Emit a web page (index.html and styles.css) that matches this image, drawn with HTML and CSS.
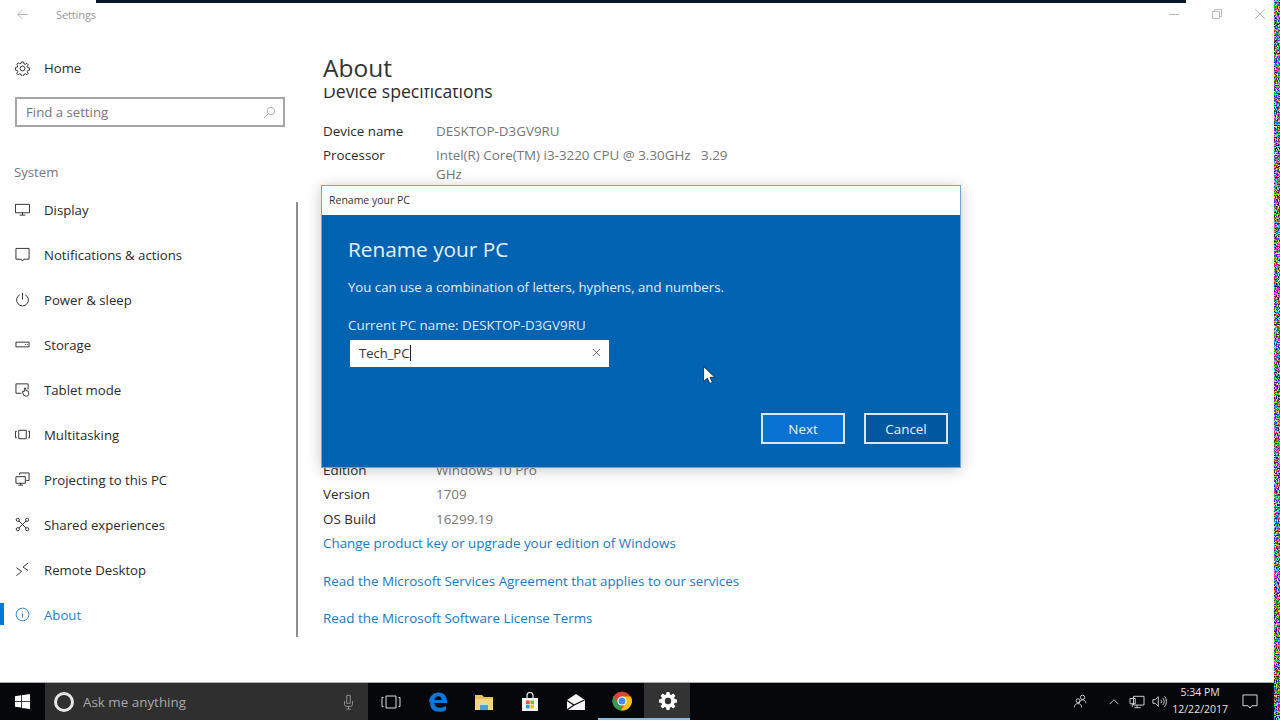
FILE: index.html
```html
<!DOCTYPE html>
<html lang="en">
<head>
  <meta charset="UTF-8">
  <meta name="viewport" content="width=device-width, initial-scale=1.0">
  <title>Settings - About</title>
  <link rel="stylesheet" href="styles.css">
</head>
<body>
  <div class="screen">
    <div class="desktop">
      <div class="video-bar"></div>

      <div class="titlebar">
        <svg class="back-icon" viewBox="0 0 14 12"><path d="M13 6H1M6 1 1 6l5 5"/></svg>
        <span class="app-name">Settings</span>
        <div class="win-controls">
          <svg viewBox="0 0 12 12"><path d="M1 6.5h10"/></svg>
          <svg viewBox="0 0 12 12"><path d="M1.5 3.5h7v7h-7zM3.5 3.5v-2h7v7h-2"/></svg>
          <svg viewBox="0 0 12 12"><path d="M1 1l10 10M11 1 1 11"/></svg>
        </div>
      </div>

      <div class="app">
        <aside class="sidebar">
          <div class="home">
            <svg class="nav-icon" viewBox="0 0 16 16"><circle cx="8" cy="8" r="2.6"/><path d="M6.9 1h2.2l.4 2 1.4.6 1.7-1.1 1.5 1.5-1.1 1.7.6 1.4 2 .4v2.2l-2 .4-.6 1.4 1.1 1.7-1.5 1.5-1.7-1.1-1.4.6-.4 2H6.9l-.4-2-1.4-.6-1.7 1.1-1.5-1.5 1.1-1.7-.6-1.4-2-.4V6.9l2-.4.6-1.4-1.1-1.7 1.5-1.5 1.7 1.1 1.4-.6z"/></svg>
            <span>Home</span>
          </div>
          <div class="search">
            <span>Find a setting</span>
            <svg viewBox="0 0 14 14"><circle cx="8.5" cy="5.5" r="4"/><path d="M5.5 8.5 1 13"/></svg>
          </div>
          <div class="section-label">System</div>
          <div class="nav-wrap">
            <nav class="nav">
              <a class="nav-item">
                <svg class="nav-icon" viewBox="0 0 16 16"><path d="M.5 2.5h15v9H.5zM8 11.5V14M5 14h6"/></svg>
                <span>Display</span>
              </a>
              <a class="nav-item">
                <svg class="nav-icon" viewBox="0 0 16 16"><path d="M1 1.5h14V13H9.5L8 15l-1.5-2H1z"/></svg>
                <span>Notifications &amp; actions</span>
              </a>
              <a class="nav-item">
                <svg class="nav-icon" viewBox="0 0 16 16"><path d="M8 1v7M5 3a6.3 6.3 0 1 0 6 0"/></svg>
                <span>Power &amp; sleep</span>
              </a>
              <a class="nav-item">
                <svg class="nav-icon" viewBox="0 0 16 16"><path d="M1 5.500h14v5H1zM10.500 8h1M13 8h.8"/></svg>
                <span>Storage</span>
              </a>
              <a class="nav-item">
                <svg class="nav-icon" viewBox="0 0 16 16"><path d="M7 12H1V2h13v6"/><path d="M10 8V6.500h1.500V9l3 1v3.500a2 2 0 0 1-2 1.500h-1a3 3 0 0 1-3-3l-.5-2H10z"/></svg>
                <span>Tablet mode</span>
              </a>
              <a class="nav-item">
                <svg class="nav-icon" viewBox="0 0 16 16"><path d="M4 3.500h8v9H4zM2 4.500H.5v7H2M14 4.500h1.500v7H14"/></svg>
                <span>Multitasking</span>
              </a>
              <a class="nav-item">
                <svg class="nav-icon" viewBox="0 0 16 16"><path d="M5 3V1h10v8h-3M1 5h10v7H1zM6 12v2M3.500 14h5"/></svg>
                <span>Projecting to this PC</span>
              </a>
              <a class="nav-item">
                <svg class="nav-icon" viewBox="0 0 16 16"><circle cx="3" cy="3" r="1.7"/><circle cx="13" cy="3" r="1.7"/><circle cx="3" cy="13" r="1.7"/><circle cx="13" cy="13" r="1.7"/><path d="M4.300 4.300l7.400 7.400M11.700 4.300l-7.400 7.400"/></svg>
                <span>Shared experiences</span>
              </a>
              <a class="nav-item">
                <svg class="nav-icon" viewBox="0 0 16 16"><path d="M1.500 6 7 10 1.500 14.500M14 1 8.500 5.500 14 9"/></svg>
                <span>Remote Desktop</span>
              </a>
              <a class="nav-item active">
                <svg class="nav-icon" viewBox="0 0 16 16"><circle cx="8" cy="8" r="6.8"/><path d="M8 7v4.500M8 4.500v1.200"/></svg>
                <span>About</span>
              </a>
            </nav>
            <div class="scroll-line"></div>
          </div>
        </aside>

        <main class="content">
          <h1 class="page-title">About</h1>
          <div class="scroller">
            <h2 class="spec-title">Device specifications</h2>
            <div class="spec-row"><span class="spec-key">Device name</span><span class="spec-val">DESKTOP-D3GV9RU</span></div>
            <div class="spec-row"><span class="spec-key">Processor</span><span class="spec-val">Intel(R) Core(TM) i3-3220 CPU @ 3.30GHz &nbsp; 3.29 GHz</span></div>
            <div class="covered"></div>
            <div class="spec-row"><span class="spec-key">Edition</span><span class="spec-val">Windows 10 Pro</span></div>
            <div class="spec-row"><span class="spec-key">Version</span><span class="spec-val">1709</span></div>
            <div class="spec-row"><span class="spec-key">OS Build</span><span class="spec-val">16299.19</span></div>
            <a class="link">Change product key or upgrade your edition of Windows</a>
            <a class="link">Read the Microsoft Services Agreement that applies to our services</a>
            <a class="link">Read the Microsoft Software License Terms</a>
          </div>
        </main>
      </div>

      <div class="dialog">
        <div class="dialog-title">Rename your PC</div>
        <div class="dialog-body">
          <h2 class="dialog-heading">Rename your PC</h2>
          <p class="dialog-hint">You can use a combination of letters, hyphens, and numbers.</p>
          <p class="dialog-current">Current PC name: DESKTOP-D3GV9RU</p>
          <div class="name-input">
            <span class="name-value">Tech_PC</span>
            <svg viewBox="0 0 10 10"><path d="M1 1l8 8M9 1 1 9"/></svg>
          </div>
          <div class="dialog-buttons">
            <button class="btn btn-primary">Next</button>
            <button class="btn">Cancel</button>
          </div>
        </div>
      </div>

      <svg class="mouse" viewBox="0 0 12 18"><path d="M.6.6v15l3.700-3.500L6.800 17.500l2.600-1.200-2.400-5h4.800z"/></svg>
    </div>

    <div class="taskbar">
      <div class="start">
        <svg viewBox="0 0 16 16"><path d="M0 2.300 6.500 1.400v6.100H0zM7.300 1.300 16 0v7.500H7.300zM0 8.300h6.500v6.200L0 13.700zM7.300 8.300H16V16l-8.700-1.200z"/></svg>
      </div>
      <div class="cortana">
        <span class="cortana-ring"></span>
        <span class="cortana-text">Ask me anything</span>
        <svg class="mic" viewBox="0 0 12 18"><path d="M4 1.500h4v9H4zM1.500 8v3.500a2.500 2.500 0 0 0 2.500 2.500h4a2.500 2.500 0 0 0 2.500-2.500V8M6 14v3M3.500 17h5"/></svg>
      </div>
      <div class="task-icons">
        <div class="task-btn">
          <svg class="line-icon" viewBox="0 0 20 16"><path d="M5 2h10v12H5zM2.500 3.500H1v9h1.500M17.500 3.500H19v9h-1.500"/></svg>
        </div>
        <div class="task-btn">
          <svg viewBox="0 0 20 20"><path fill="#0a78d7" d="M1 9C2 3.500 6 .5 10.500.5c5.500 0 8.700 3.800 8.700 10.500H6.300c.2 3 2.400 4.800 5.400 4.800 2.300 0 4.400-.6 6.300-1.800v4.200c-2 1.200-4.400 1.600-6.800 1.600C5.200 19.800 1.700 16 2.300 11c-.3.100-.9-.7-1.300-2zm5.400-1h7.200c0-2.300-1.200-3.800-3.400-3.800C8.300 4.200 6.800 5.700 6.400 8z"/></svg>
        </div>
        <div class="task-btn">
          <svg viewBox="0 0 20 20"><path fill="#e8c060" d="M1 3h7l2 2h9v3H1z"/><path fill="#f6d67e" d="M1 7h18v11H1z"/><path fill="#4aa3d8" d="M6 13h8v5H6z"/><path fill="#bfe0f2" d="M7.500 11h5v2h-5z"/></svg>
        </div>
        <div class="task-btn">
          <svg viewBox="0 0 20 20"><path fill="none" stroke="#eee" stroke-width="1.200" d="M7 6V3.500a3 3 0 0 1 6 0V6"/><path fill="#f4f4f4" d="M2 6h16v13H2z"/><path fill="#e8542c" d="M6 8.500h3.600v3.600H6z"/><path fill="#7fba2e" d="M10.400 8.500H14v3.600h-3.600z"/><path fill="#1da1e8" d="M6 12.800h3.600v3.600H6z"/><path fill="#f9b90f" d="M10.400 12.800H14v3.600h-3.600z"/></svg>
        </div>
        <div class="task-btn">
          <svg viewBox="0 0 20 20"><path fill="#f6f6f6" d="M1 8 10 2l9 6v10H1z"/><path fill="none" stroke="#0a0a0a" stroke-width="1.200" d="M1 8.500 8 13l10.500-5M1 18l7-5"/></svg>
        </div>
        <div class="task-btn running">
          <svg viewBox="0 0 20 20"><circle cx="10" cy="10" r="9.500" fill="#dc4437"/><path fill="#f4c20d" d="M10 5.500h8.800A9.500 9.500 0 0 1 8.800 19.400L13.500 12z"/><path fill="#2f9e50" d="M1.800 5 6.500 13l3.300 1.900-1 4.500A9.500 9.500 0 0 1 1.800 5z"/><circle cx="10" cy="10" r="4.600" fill="#fff"/><circle cx="10" cy="10" r="3.500" fill="#4a88ee"/></svg>
        </div>
        <div class="task-btn running settings-btn">
          <svg viewBox="0 0 20 20"><path fill="#fff" fill-rule="evenodd" d="M8.500 1h3l.4 2.400 1.400.6 2-1.400 2.100 2.100-1.400 2 .6 1.400 2.400.4v3l-2.400.4-.6 1.400 1.400 2-2.100 2.100-2-1.400-1.400.6-.4 2.400h-3l-.4-2.400-1.400-.6-2 1.400-2.100-2.100 1.400-2-.6-1.400L1 11.500v-3l2.400-.4.6-1.400-1.400-2 2.100-2.100 2 1.400 1.400-.6zM10 6.800a3.200 3.200 0 1 0 0 6.400 3.200 3.200 0 0 0 0-6.400z"/></svg>
        </div>
      </div>
      <div class="tray">
        <svg class="tray-people" viewBox="0 0 18 18"><circle cx="11.500" cy="4" r="2.600"/><path d="M7.500 11c.3-2.500 2-4 4-4s3.800 1.500 4 4"/><circle cx="6" cy="8" r="2.300"/><path d="M1.500 16c.2-3 2-4.500 4.500-4.500s4 1.500 4.500 4.500"/></svg>
        <svg class="tray-chevron" viewBox="0 0 12 8"><path d="M1 7l5-5 5 5"/></svg>
        <svg class="tray-net" viewBox="0 0 18 16"><path d="M5 1.500h12v10H5zM1 4h6v6H1zM3.500 10v3.500M9 11.500v3M6 14.500h7"/></svg>
        <svg class="tray-vol" viewBox="0 0 18 14"><path d="M1 5h2.500L7 1.500v11L3.500 9H1zM10 5a3 3 0 0 1 0 4M12 3a6 6 0 0 1 0 8M14 1a9 9 0 0 1 0 12"/></svg>
        <div class="clock"><span>5:34 PM</span><span>12/22/2017</span></div>
        <svg class="tray-notify" viewBox="0 0 16 16"><path d="M.5 1h15v11.500H10L8 15l-2-2.500H.5z"/></svg>
      </div>
    </div>

    <svg class="noise">
      <filter id="static" color-interpolation-filters="sRGB">
        <feTurbulence type="fractalNoise" baseFrequency="0.9" numOctaves="2" seed="4"/>
        <feColorMatrix values="4.5 0 0 0 -1.8 0 4.5 0 0 -1.8 0 0 4.5 0 -1.700 0 0 0 0 1"/>
      </filter>
      <rect width="100%" height="100%" filter="url(#static)"/>
    </svg>
  </div>
</body>
</html>
```

FILE: styles.css
```css
* { box-sizing: border-box; }
html, body { height: 100%; }
body {
  margin: 0;
  background: #fff;
  color: #2b2b2b;
  font-family: "Open Sans", "Noto Sans", sans-serif;
  font-size: 13.4px;
  overflow: hidden;
}

svg { display: block; fill: none; stroke: currentColor; }

.screen {
  position: relative;
  width: 1280px;
  height: 720px;
  display: flex;
  flex-direction: column;
}

.desktop {
  position: relative;
  flex: 1;
  min-height: 0;
  padding-top: 3px;
}

.video-bar {
  position: absolute;
  top: 0;
  left: 96px;
  width: 1090px;
  height: 3px;
  background: #0a1726;
}

/* title bar */
.titlebar {
  display: flex;
  align-items: center;
  height: 24px;
  padding: 0 0 2px 17px;
  color: #999;
}
.back-icon { width: 12px; height: 11px; margin-right: 27px; stroke: #aaa; }
.app-name { font-size: 11.2px; letter-spacing: -0.2px; }
.win-controls {
  margin-left: auto;
  display: flex;
  gap: 31px;
  padding-right: 14px;
  color: #bbb;
}
.win-controls svg { width: 12px; height: 12px; }

/* left column */
.app { display: flex; }

.sidebar {
  width: 300px;
  flex-shrink: 0;
  padding-top: 26px;
  font-size: 13.2px;
}
.home {
  display: flex;
  align-items: center;
  gap: 14px;
  padding-left: 15px;
  height: 30px;
}
.nav-icon { width: 15px; height: 15px; flex-shrink: 0; stroke-width: 1; }

.search {
  display: flex;
  align-items: center;
  justify-content: space-between;
  width: 270px;
  height: 30px;
  margin: 14px 0 0 15px;
  padding: 0 7px 0 9px;
  border: 2px solid #a6a6a6;
  color: #777;
}
.search svg { width: 13px; height: 13px; color: #aaa; }

.section-label {
  margin: 33px 0 0 14px;
  color: #767676;
  line-height: 24px;
}

.nav-wrap { position: relative; margin-top: 3px; }
.nav { display: flex; flex-direction: column; }
.nav-item {
  position: relative;
  display: flex;
  align-items: center;
  gap: 14px;
  height: 45px;
  padding-left: 15px;
}
.nav-item.active { color: #2f7fc5; }
.nav-item.active::before {
  content: "";
  position: absolute;
  left: 0;
  top: 11px;
  width: 4px;
  height: 22px;
  background: #0078d7;
}
.scroll-line {
  position: absolute;
  top: 15px;
  left: 296px;
  width: 2px;
  height: 435px;
  background: #8e8e8e;
}

/* right column */
.content { flex: 1; padding: 23px 0 0 23px; }
.page-title {
  height: 38px;
  margin: 0;
  font-size: 24.5px;
  font-weight: 400;
  line-height: 36px;
  color: #333;
}
.scroller { height: 560px; overflow: hidden; }
.spec-title {
  margin: -9px 0 18.5px;
  font-size: 17.6px;
  font-weight: 400;
  line-height: 24px;
}
.spec-row { display: flex; line-height: 18.5px; margin-bottom: 6px; }
.spec-key { width: 113px; flex-shrink: 0; }
.spec-val { width: 320px; color: #767676; }
.covered { height: 271.5px; }
.link {
  display: block;
  color: #1a79c4;
  line-height: 19px;
  margin-bottom: 18.5px;
}

/* rename dialog */
.dialog {
  position: absolute;
  left: 321px;
  top: 185px;
  width: 640px;
  height: 283px;
  border: 1px solid #6fa5d0;
  background: #0063b1;
  box-shadow: 0 2px 14px rgba(0, 0, 0, 0.22);
}
.dialog-title {
  height: 29px;
  padding-left: 7px;
  background: #fff;
  font-size: 10.5px;
  line-height: 28px;
  color: #333;
}
.dialog-body {
  position: relative;
  height: 252px;
  padding: 19px 12px 0 26px;
  color: #fff;
}
.dialog-heading {
  margin: 0;
  font-size: 20.8px;
  font-weight: 400;
  line-height: 30px;
  color: #e8f2fa;
}
.dialog-hint { margin: 13px 0 0; font-size: 13.2px; line-height: 20px; color: #e4effa; }
.dialog-current { margin: 18px 0 0; line-height: 20px; color: #dcebf8; }
.name-input {
  display: flex;
  align-items: center;
  justify-content: space-between;
  width: 259px;
  height: 27px;
  margin: 5px 0 0 2px;
  padding: 0 8px 2px 9px;
  background: #fff;
  color: #333;
  font-size: 13px;
}
.name-value { border-right: 1px solid #222; line-height: 16px; padding-right: 1px; }
.name-input svg { width: 9px; height: 9px; color: #555; }
.dialog-buttons {
  display: flex;
  justify-content: flex-end;
  gap: 19px;
  margin-top: 46px;
}
.btn {
  width: 84px;
  height: 31px;
  border: 2px solid #d6e8f6;
  background: #0058a0;
  color: #e8f2fa;
  font: inherit;
  padding: 0;
}
.btn-primary { background: #0a72d2; }

.mouse {
  position: absolute;
  left: 703px;
  top: 366px;
  width: 12px;
  height: 18px;
  fill: #fff;
  stroke: #0a2340;
  stroke-width: 0.8;
}

/* taskbar */
.taskbar {
  display: flex;
  align-items: stretch;
  height: 38px;
  flex-shrink: 0;
  background: #05070a;
  border-top: 1px solid #aaa;
  color: #ddd;
}
.start {
  width: 45px;
  display: flex;
  align-items: center;
  justify-content: center;
}
.start svg { width: 15px; height: 15px; fill: #fff; stroke: none; }
.cortana {
  width: 323px;
  display: flex;
  align-items: center;
  padding-left: 9px;
  background: #2f2f2f;
  color: #a8a8a8;
}
.cortana-ring {
  width: 20px;
  height: 20px;
  border: 3px solid #e6e6e6;
  border-radius: 50%;
  margin-right: 9px;
}
.mic { width: 11px; height: 16px; margin-left: auto; margin-right: 14px; color: #999; }
.task-icons { display: flex; }
.task-btn {
  width: 46px;
  display: flex;
  align-items: center;
  justify-content: center;
  padding-left: 2px;
}
.task-btn svg { width: 20px; height: 20px; stroke: none; }
.task-btn .line-icon { stroke: #ddd; height: 16px; margin-left: -3px; }
.running { border-bottom: 2px solid #8ab8de; }
.settings-btn { background: #333; }

.tray {
  margin-left: auto;
  display: flex;
  align-items: center;
  padding-right: 22px;
  color: #e4e4e4;
}
.tray-people { width: 15px; height: 15px; margin-right: 20px; }
.tray-chevron { width: 12px; height: 7px; margin-right: 9px; }
.tray-net { width: 16px; height: 14px; margin-right: 7px; }
.tray-vol { width: 16px; height: 13px; margin-right: 4px; }
.clock {
  display: flex;
  flex-direction: column;
  align-items: center;
  margin-right: 14px;
  padding-bottom: 2px;
  font-size: 10.5px;
  line-height: 17px;
}
.tray-notify { width: 16px; height: 15px; }

/* video noise down the right edge */
.noise {
  position: absolute;
  top: 0;
  right: 0;
  width: 6px;
  height: 100%;
}
```
